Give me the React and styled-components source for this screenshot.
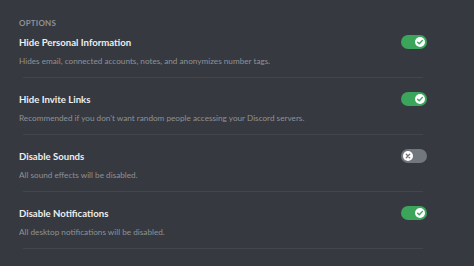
import styled, { createGlobalStyle } from "styled-components"

const Global = createGlobalStyle`
    html, body {
        margin: 0;
        background: #36393f;
        font-family: Lato, "Noto Sans", sans-serif;
    }
`

const Panel = styled.section`
    width: 474px;
    height: 266px;
    box-sizing: border-box;
    padding: 18px 47px 0 19px;
    background: #36393f;
    overflow: hidden;
`

const Heading = styled.h2`
    margin: 0 0 7px;
    font-size: 8px;
    font-weight: 700;
    letter-spacing: 0.2px;
    color: #8e9297;
    text-transform: uppercase;
`

const Row = styled.div`
    position: relative;
    display: flex;
    flex-direction: column;
    gap: 7px;
    padding-bottom: 12px;
    margin-bottom: 14px;

    &::after {
        content: "";
        position: absolute;
        left: 4px;
        right: 4px;
        bottom: 0;
        height: 1px;
        background: #42454a;
    }
`

const Top = styled.div`
    display: flex;
    align-items: center;
    justify-content: space-between;
`

const Title = styled.span`
    font-size: 9.6px;
    font-weight: 700;
    color: #eceef0;
`

const Desc = styled.span`
    font-size: 8.2px;
    color: #8e9297;
`

const Toggle = styled.div`
    position: relative;
    width: 26px;
    height: 14px;
    border-radius: 7px;
    background: ${p => (p.$on ? "#3ba55c" : "#72767d")};
    flex-shrink: 0;
`

const Knob = styled.div`
    position: absolute;
    top: 2px;
    ${p => (p.$on ? "right: 2px;" : "left: 2px;")}
    width: 10px;
    height: 10px;
    border-radius: 50%;
    background: #fff;
    display: flex;
    align-items: center;
    justify-content: center;
`

const Switch = ({ on }) => (
    <Toggle $on={on}>
        <Knob $on={on}>
            {on ? (
                <svg width="8" height="8" viewBox="0 0 8 8">
                    <path d="M1.6 4.2 L3.3 5.8 L6.4 2.4" stroke="#3ba55c" strokeWidth="1.4" fill="none" strokeLinecap="round" strokeLinejoin="round" />
                </svg>
            ) : (
                <svg width="8" height="8" viewBox="0 0 8 8">
                    <path d="M2.3 2.3 L5.7 5.7 M5.7 2.3 L2.3 5.7" stroke="#72767d" strokeWidth="1.4" fill="none" strokeLinecap="round" />
                </svg>
            )}
        </Knob>
    </Toggle>
)

const options = [
    { title: "Hide Personal Information", desc: "Hides email, connected accounts, notes, and anonymizes number tags.", on: true },
    { title: "Hide Invite Links", desc: "Recommended if you don't want random people accessing your Discord servers.", on: true },
    { title: "Disable Sounds", desc: "All sound effects will be disabled.", on: false },
    { title: "Disable Notifications", desc: "All desktop notifications will be disabled.", on: true },
]

const App = () => {
    return (
        <Panel>
            <Global />
            <Heading>Options</Heading>
            {options.map(o => (
                <Row key={o.title}>
                    <Top>
                        <Title>{o.title}</Title>
                        <Switch on={o.on} />
                    </Top>
                    <Desc>{o.desc}</Desc>
                </Row>
            ))}
        </Panel>
    )
}

export default App
